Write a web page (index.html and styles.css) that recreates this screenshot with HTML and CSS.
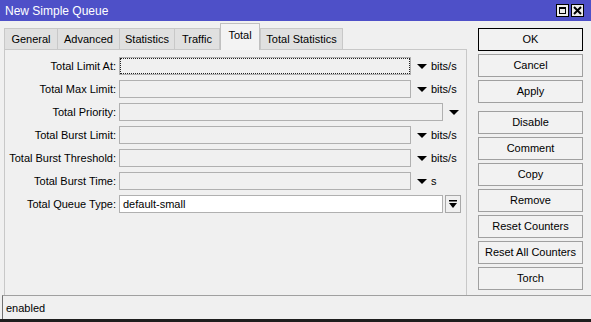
FILE: index.html
```html
<!DOCTYPE html>
<html lang="en">
<head>
    <meta charset="UTF-8">
    <title>New Simple Queue</title>
    <link rel="stylesheet" href="styles.css">
</head>
<body>
    <div class="window">
        <div class="titlebar">
            <span class="title">New Simple Queue</span>
            <div class="title-btns">
                <span class="tb-btn"><span class="max-icon"></span></span>
                <span class="tb-btn">
                    <svg width="9" height="9" viewBox="0 0 9 9"><path d="M1 1L8 8M8 1L1 8" stroke="#000" stroke-width="2"/></svg>
                </span>
            </div>
        </div>

        <div class="main">
            <div class="left">
                <div class="tabs">
                    <div class="tab">General</div>
                    <div class="tab">Advanced</div>
                    <div class="tab">Statistics</div>
                    <div class="tab">Traffic</div>
                    <div class="tab active">Total</div>
                    <div class="tab">Total Statistics</div>
                </div>
                <div class="panel">
                    <div class="row">
                        <label class="label">Total Limit At:</label>
                        <div class="input focus"></div>
                        <span class="arrow"></span>
                        <span class="unit">bits/s</span>
                    </div>
                    <div class="row">
                        <label class="label">Total Max Limit:</label>
                        <div class="input"></div>
                        <span class="arrow"></span>
                        <span class="unit">bits/s</span>
                    </div>
                    <div class="row">
                        <label class="label">Total Priority:</label>
                        <div class="input wide"></div>
                        <span class="arrow"></span>
                    </div>
                    <div class="row">
                        <label class="label">Total Burst Limit:</label>
                        <div class="input"></div>
                        <span class="arrow"></span>
                        <span class="unit">bits/s</span>
                    </div>
                    <div class="row">
                        <label class="label">Total Burst Threshold:</label>
                        <div class="input"></div>
                        <span class="arrow"></span>
                        <span class="unit">bits/s</span>
                    </div>
                    <div class="row">
                        <label class="label">Total Burst Time:</label>
                        <div class="input"></div>
                        <span class="arrow"></span>
                        <span class="unit">s</span>
                    </div>
                    <div class="row">
                        <label class="label">Total Queue Type:</label>
                        <div class="input wide white">default-small</div>
                        <span class="drop-btn">
                            <svg width="8" height="8" viewBox="0 0 8 8"><rect x="0" y="0" width="8" height="1.5" fill="#000"/><path d="M0 3H8L4 8Z" fill="#000"/></svg>
                        </span>
                    </div>
                </div>
            </div>

            <div class="buttons">
                <div class="btn default">OK</div>
                <div class="btn">Cancel</div>
                <div class="btn">Apply</div>
                <div class="btn spaced">Disable</div>
                <div class="btn">Comment</div>
                <div class="btn">Copy</div>
                <div class="btn">Remove</div>
                <div class="btn">Reset Counters</div>
                <div class="btn">Reset All Counters</div>
                <div class="btn">Torch</div>
            </div>
        </div>

        <div class="statusbar">enabled</div>
    </div>
</body>
</html>
```

FILE: styles.css
```css
body {
    margin: 0;
    padding: 0;
    background: #f0f0f0;
    font-family: 'Liberation Sans', Arial, sans-serif;
    font-size: 11px;
    color: #000;
}
.window {
    width: 591px;
    height: 322px;
    box-sizing: border-box;
    display: flex;
    flex-direction: column;
    background: #f0f0f0;
    border-bottom: 3px solid #1e1e1e;
}
.titlebar {
    height: 21px;
    flex-shrink: 0;
    background: #4e50c8;
    display: flex;
    align-items: center;
    justify-content: space-between;
    padding: 0 7px 0 5px;
}
.title {
    color: #fff;
    font-size: 12px;
}
.title-btns {
    display: flex;
    gap: 2px;
    margin-top: -1px;
}
.tb-btn {
    width: 11px;
    height: 11px;
    border: 1px solid #000;
    background: #ececec;
    display: flex;
    align-items: center;
    justify-content: center;
}
.max-icon {
    width: 5px;
    height: 4px;
    border: 1px solid #000;
    border-top-width: 2px;
}

/* zone principale */
.main {
    flex: 1;
    display: flex;
}
.left {
    width: 463px;
    margin-left: 4px;
    display: flex;
    flex-direction: column;
}
.tabs {
    height: 28px;
    display: flex;
    align-items: flex-end;
}
.tab {
    height: 20px;
    line-height: 20px;
    text-align: center;
    background: #e0e0e0;
    border: 1px solid #c8c8c8;
    border-bottom: none;
    margin-right: -1px;
}
.tab:nth-child(1) { width: 52px; }
.tab:nth-child(2) { width: 61px; }
.tab:nth-child(3) { width: 54px; }
.tab:nth-child(4) { width: 44px; }
.tab:nth-child(6) { width: 81px; }
.tab.active {
    width: 38px;
    height: 26px;
    line-height: 23px;
    background: #f3f3f3;
    border-color: #c0c0c0;
    margin: 0 0 -1px 1px;
    position: relative;
    z-index: 1;
}
.panel {
    flex: 1;
    border: 1px solid #c8c8c8;
    border-bottom: none;
    padding-top: 7px;
}
.row {
    display: flex;
    align-items: center;
    height: 18px;
    margin-bottom: 5px;
}
.label {
    width: 111px;
    text-align: right;
    margin-right: 3px;
}
.input {
    width: 287px;
    height: 16px;
    border: 1px solid #b0b0b0;
    background: #f0f0f0;
    line-height: 16px;
    padding-left: 3px;
    box-sizing: content-box;
}
.input.focus {
    outline: 1px dotted #222;
    outline-offset: -2px;
}
.input.wide { width: 319px; }
.input.white { background: #fff; }
.arrow {
    width: 0;
    height: 0;
    border-left: 5px solid transparent;
    border-right: 5px solid transparent;
    border-top: 5px solid #000;
    margin-left: 6px;
}
.unit { margin-left: 4px; }
.drop-btn {
    width: 14px;
    height: 16px;
    margin-left: 2px;
    border: 1px solid #a8a8a8;
    background: #f0f0f0;
    display: flex;
    align-items: center;
    justify-content: center;
}

/* boutons de droite */
.buttons {
    width: 105px;
    margin-left: 11px;
    padding-top: 7px;
    display: flex;
    flex-direction: column;
    gap: 3px;
}
.btn {
    height: 21px;
    line-height: 21px;
    text-align: center;
    border: 1px solid #a0a0a0;
    background: #f2f2f2;
}
.btn.default { border-color: #000; }
.btn.spaced { margin-top: 5px; }

.statusbar {
    height: 23px;
    flex-shrink: 0;
    border-top: 1px solid #a0a0a0;
    border-left: 1px solid #707070;
    margin-left: 2px;
    padding-left: 3px;
    line-height: 24px;
}
```
